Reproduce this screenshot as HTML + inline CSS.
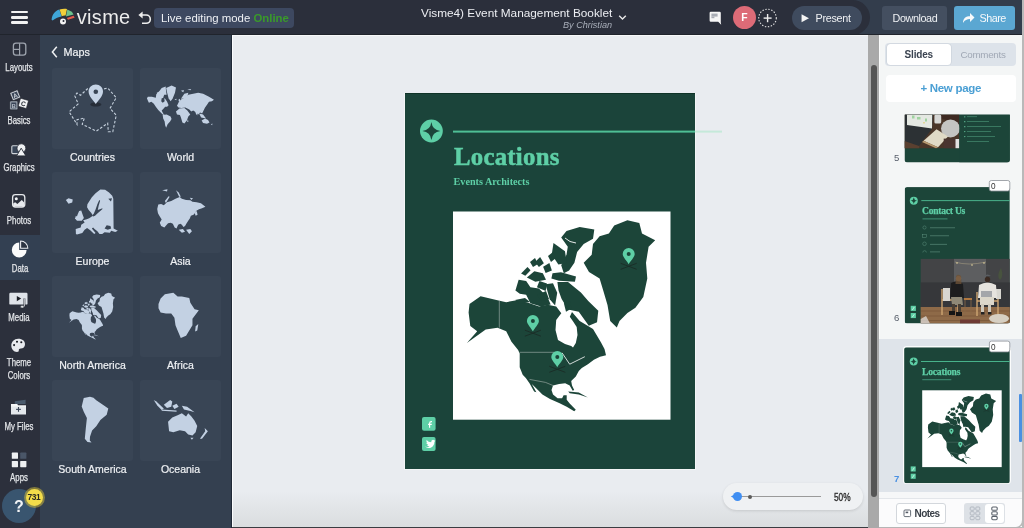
<!DOCTYPE html>
<html><head><meta charset="utf-8">
<style>
*{margin:0;padding:0;box-sizing:border-box}
html,body{width:1024px;height:528px;overflow:hidden;font-family:"Liberation Sans",sans-serif;background:#e9ecef}
body{will-change:transform}
.abs{position:absolute}
#topbar{position:absolute;left:0;top:0;width:1024px;height:35px;background:#333d4c}
#topdark{position:absolute;left:0;top:0;width:870px;height:35px;background:#2b2f3b;border-radius:0 18px 18px 0}
#leftbar{position:absolute;left:0;top:35px;width:40px;height:493px;background:#2c303c}
#panel{position:absolute;left:40px;top:35px;width:192px;height:493px;background:#344050;border-right:1.5px solid #1f2836}
#canvas{position:absolute;left:232px;top:35px;width:636px;height:493px;background:linear-gradient(to bottom,#e9ecf0 0,#e9ecf0 455px,#dadddf 491px);border-left:1.5px solid #fbfcfd;border-top:1px solid #f7f8f9;border-bottom:1px solid #f4f5f6}
#sbtrack{position:absolute;left:868px;top:35px;width:11px;height:493px;background:#a9a9a9}
#sbthumb{position:absolute;left:871px;top:65px;width:6px;height:432px;background:#555;border-radius:3px}
#right{position:absolute;left:879px;top:35px;width:143px;height:493px;background:#f4f6f6;border-left:1px solid #fbfcfc}
#edge{position:absolute;left:1022px;top:0;width:2px;height:528px;background:#b9b9b9}
</style></head>
<body>
<div id="topbar"></div>
<div id="topdark"></div>
<div class="abs" style="left:0;top:34px;width:1022px;height:1px;background:#20242c"></div>
<div id="leftbar"></div>
<div id="panel"></div>
<div id="canvas"></div>
<div id="sbtrack"></div>
<div class="abs" style="left:232px;top:527px;width:636px;height:1px;background:#3a3d42"></div>
<div id="sbthumb"></div>
<div id="right"></div>



<!-- CANVAS SLIDE -->
<div class="abs" style="left:404px;top:92.5px;width:292px;height:377px;background:#f3f5f6"></div>
<div class="abs" style="left:404.8px;top:93.3px;width:290.4px;height:375.4px;background:#0f3328"></div>
<div class="abs" style="left:405px;top:93.5px;width:290px;height:375px;background:#1b443a"></div>
<svg class="abs" style="left:0;top:0" width="868" height="528" viewBox="0 0 868 528">
  <circle cx="431.4" cy="131" r="11.4" fill="#5ecfa6"/>
  <path d="M431.4 122 Q432.4 130 440.4 131 Q432.4 132 431.4 140 Q430.4 132 422.4 131 Q430.4 130 431.4 122 Z" fill="#1c4539"/>
  <rect x="453" y="130.6" width="242" height="2" fill="#4fbf95"/>
  <rect x="695" y="130.6" width="27" height="2" fill="#c5e9da"/>
  <rect x="453" y="211.5" width="217.5" height="208.2" fill="#ffffff"/>
<path d="M469.5 303.9 L480.6 296.2 L498.5 300.5 L506.2 302.2 L515.2 300.5 L528.9 303 L539.1 306.4 L547.7 304.7 L556.2 306.4 L561.3 313.3 L556.2 320.1 L555.5 330 L558 340 L565 344 L571.2 346 L573 347.6 L575.8 343 L577.5 335 L576.7 326.9 L573.3 321.8 L569.8 316.7 L572 312 L579.7 321 L593 328.9 L600.9 342.2 L604.5 349.1 L606 355.2 L600 356.7 L593.9 359.7 L587.9 364.2 L581.8 368 L578.8 371 L575.8 376.4 L571.2 380.9 L572 385.5 L574.2 390 L572.7 390.8 L569.7 385.5 L565.2 383.2 L559.1 383.9 L553 385.5 L551.5 390 L553 394.5 L557.6 398.3 L562.1 398.3 L563.6 395.3 L566.7 395.3 L566.7 399.8 L569.7 403.6 L575.8 409.7 L574.2 411.2 L566.7 406.7 L559.1 402.9 L550 399.1 L542.4 394.5 L536.4 388.5 L531.8 383.9 L536.4 392.3 L534.1 391.5 L529.5 383.2 L525.8 377.9 L522.7 374.8 L519.7 367.3 L519.7 353.6 L518.1 349.9 L511.3 341.4 L506.2 331.2 L497.6 327.7 L485.7 329.5 L466.9 343.1 L477.2 331.2 L470.3 326 L468.6 312.4 Z" fill="#1c4539"/>
<path d="M583.7 262.7 L591.7 254.7 L593 244.1 L599.6 236.2 L608.9 233.5 L614.2 225.6 L627.4 220.3 L639.3 222.9 L642 233.5 L655.2 240.2 L648.6 246.8 L646 262.7 L647.3 278.6 L643.3 297.1 L635.4 307.7 L627.4 313 L619.5 321 L616.8 327.6 L610.2 321 L607.5 305.1 L603.6 291.8 L599.6 278.6 L589 272 Z" fill="#1c4539"/>
<path d="M561.2 237.5 L566.5 230.9 L579.7 226.9 L594.3 229.6 L593 238.8 L583.7 244.1 L577.1 252.1 L574.4 262.7 L569.1 270.6 L563.8 273.3 L561.2 265.3 L566.5 254.7 L567.8 246.8 Z" fill="#1c4539"/>
<path d="M553.49 243.06 L564.98 251.31 L566.74 262.93 L558.36 264.56 L551.74 254.56 Z" fill="#1c4539"/>
<path d="M515.41 290.54 L518.66 279.79 L526.16 280.92 L530.41 287.29 L538.91 288.42 L547.41 296.92 L550.66 304.42 L541.03 306.54 L530.41 303.29 L526.16 294.79 L519.78 293.67 Z" fill="#1c4539"/>
<path d="M521.09 273.58 L527.47 267.08 L530.59 270.33 L525.34 275.71 Z" fill="#1c4539"/>
<path d="M526.86 277.57 L534.36 271.2 L542.86 273.32 L545.98 279.7 L535.36 281.82 Z" fill="#1c4539"/>
<path d="M552.51 273.21 L561.01 272.21 L576.01 276.46 L574.89 281.71 L558.89 280.71 L551.39 278.59 Z" fill="#1c4539"/>
<path d="M545.47 284.26 L552.97 283.14 L557.23 292.76 L555.1 305.51 L549.73 299.13 Z" fill="#1c4539"/>
<path d="M557.4 281.9 L568.03 281.9 L580.9 292.52 L588.28 301.02 L598.28 310.65 L597.03 322.27 L588.78 325.65 L578.78 311.65 L568.03 309.53 L561.65 298.9 L558.53 290.4 Z" fill="#1c4539"/>
<path d="M563.9 303.32 L570.27 301.19 L571.4 308.57 L566.02 311.82 Z" fill="#1c4539"/>
<path d="M535.12 261.94 L540.12 256.94 L543.88 263.19 L538.88 266.94 Z" fill="#1c4539"/>
<path d="M543.12 266.69 L549.38 262.94 L551.88 270.44 L545.62 272.94 Z" fill="#1c4539"/>
<path d="M546.94 283.56 L539.44 281.06 L536.94 287.31 L545.69 291.06 Z" fill="#1c4539"/>
<path d="M568.2 391.5 L578.8 392.6 L587.9 397.6 L578.8 394.6 L569.7 393.2 Z" fill="#1c4539"/>
<path d="M530 262 L535 258 L538 264 L533 267 Z" fill="#1c4539"/>
<path d="M548 256 L553 252 L556 258 L551 262 Z" fill="#1c4539"/>
<path d="M537 295 L546 291 L549 299 L541 301 Z" fill="#1c4539"/>
<path d="M515 300 L525 298 L530 302 L520 304 Z" fill="#1c4539"/>
<path d="M562.1 352.9 L569.7 364.2 L584.8 356.7" fill="none" stroke="#ffffff" stroke-width="0.8"/>
<path d="M565 238 L570 241.5 L576 243" fill="none" stroke="#ffffff" stroke-width="0.9"/>
<path d="M499.3 300.5 L499.3 327.7" stroke="#a9b5b0" stroke-width="0.6"/>
<path d="M519.7 352.3 L554.5 352.3" stroke="#a9b5b0" stroke-width="0.6"/>
<path d="M529.5 379.4 L545.5 382.4 L553 385.5" fill="none" stroke="#a9b5b0" stroke-width="0.6"/>
<path d="M628.7 264.3 C627.2 261.3 622.7 257.2 622.7 254.0 A6 6 0 1 1 634.7 254.0 C634.7 257.2 630.2 261.3 628.7 264.3 Z" fill="#5ecfa6"/><circle cx="628.7" cy="254.0" r="2" fill="#1c4539"/><path d="M620.7 269.3 L636.7 263.3 M620.7 263.3 L636.7 269.3" stroke="#1b2a25" stroke-width="0.9" opacity="0.9"/>
<path d="M532.9 331.2 C531.4 328.2 526.9 324.09999999999997 526.9 320.9 A6 6 0 1 1 538.9 320.9 C538.9 324.09999999999997 534.4 328.2 532.9 331.2 Z" fill="#5ecfa6"/><circle cx="532.9" cy="320.9" r="2" fill="#1c4539"/><path d="M524.9 336.2 L540.9 330.2 M524.9 330.2 L540.9 336.2" stroke="#1b2a25" stroke-width="0.9" opacity="0.9"/>
<path d="M557.3 367.3 C555.8 364.3 551.3 360.2 551.3 357.0 A6 6 0 1 1 563.3 357.0 C563.3 360.2 558.8 364.3 557.3 367.3 Z" fill="#5ecfa6"/><circle cx="557.3" cy="357.0" r="2" fill="#1c4539"/><path d="M549.3 372.3 L565.3 366.3 M549.3 366.3 L565.3 372.3" stroke="#1b2a25" stroke-width="0.9" opacity="0.9"/>
  <rect x="422" y="417" width="13.6" height="13.8" rx="2" fill="#5ecfa6"/>
  <rect x="422" y="437.1" width="13.6" height="13.8" rx="2" fill="#5ecfa6"/>
  <path d="M429.6 427.8 V423.4 Q429.6 421.6 431.4 421.6 H432 M428.1 424.4 H431.8" fill="none" stroke="#ffffff" stroke-width="1.2"/>
  <path d="M424.8 446.6 Q427.5 447.6 429.6 446.4 Q427.6 446.3 427 445 Q427.8 445.1 428.3 444.8 Q426.4 444.3 426.2 442.5 Q426.8 442.8 427.4 442.8 Q425.8 441.6 426.6 439.9 Q428.4 442 431.2 442.2 Q431 440 433 439.8 Q433.8 439.8 434.3 440.4 L435.2 440 L434.7 440.9 L435.4 440.8 Q435 441.4 434.4 441.7 Q434.5 445.6 431.2 447.4 Q428 448.8 424.8 446.6 Z" fill="#ffffff"/>
</svg>
<div class="abs" style="left:454px;top:142.3px;font-family:'Liberation Serif',serif;font-weight:bold;font-size:24.8px;line-height:30px;color:#5ecfa6;letter-spacing:0.25px;white-space:nowrap;-webkit-text-stroke:0.5px #5ecfa6">Locations</div>
<div class="abs" style="left:453.5px;top:174.5px;font-family:'Liberation Serif',serif;font-weight:bold;font-size:10.2px;line-height:14px;color:#5ecfa6;white-space:nowrap">Events Architects</div>


<!-- ZOOM CONTROL -->
<div class="abs" style="left:722.5px;top:483.2px;width:140px;height:27px;background:#eff1f3;border-radius:13.5px;box-shadow:0 1px 3px rgba(0,0,0,0.12)"></div>
<div class="abs" style="left:740px;top:496px;width:80.5px;height:1px;background:#9a9a9a"></div>
<div class="abs" style="left:748px;top:494.6px;width:4.2px;height:4.2px;border-radius:50%;background:#5a5a5a"></div>
<div class="abs" style="left:733.3px;top:492.1px;width:9px;height:9px;border-radius:50%;background:#3f8ef2"></div>
<svg class="abs" style="left:730px;top:494px" width="5" height="5" viewBox="0 0 5 5"><path d="M4.5 0.6 L0.8 2.6 L4.5 4.4 Z" fill="#3f8ef2"/></svg>
<div class="abs" style="left:822px;top:489.8px;width:40px;text-align:center;font-size:11.2px;line-height:14px;color:#2e2e2e;transform:scaleX(0.74);transform-origin:21px 0;-webkit-text-stroke:0.35px #2e2e2e">50%</div>
<!-- RIGHT PANEL -->
<div class="abs" style="left:885px;top:43px;width:131px;height:23px;background:#dde3ea;border-radius:4px"></div>
<div class="abs" style="left:886.5px;top:44px;width:64.5px;height:21px;background:#ffffff;border-radius:3.5px;box-shadow:0 0 0 0.6px #c9d0d8"></div>
<div class="abs" style="left:886.5px;top:44px;width:64.5px;font-size:10px;line-height:21px;text-align:center;color:#3a4350;font-weight:bold;letter-spacing:-0.2px">Slides</div>
<div class="abs" style="left:951px;top:44px;width:64px;font-size:9.8px;line-height:21px;text-align:center;color:#a0a8b5;letter-spacing:-0.3px">Comments</div>
<div class="abs" style="left:886px;top:75px;width:129.5px;height:26.5px;background:#ffffff;border-radius:4px"></div>
<div class="abs" style="left:886px;top:81px;width:129.5px;font-size:11.5px;line-height:14px;text-align:center;color:#4a9fd4;font-weight:bold;letter-spacing:-0.3px">+ New page</div>

<!-- selected row -->
<div class="abs" style="left:879px;top:339px;width:143px;height:153px;background:#dfe4ea"></div>
<div class="abs" style="left:903.1px;top:346.3px;width:107.7px;height:138px;background:#fbfcfc;border-radius:3.5px"></div>
<div class="abs" style="left:1019.4px;top:394px;width:2.6px;height:48px;background:#4a90e2;border-radius:1px"></div>

<!-- thumb 5 -->
<svg class="abs" style="left:0;top:0" width="1024" height="528" viewBox="0 0 1024 528">
  <defs><clipPath id="c5"><path d="M904.5 114.4 H1009.9 V159.5 Q1009.9 162.5 1006.9 162.5 H907.5 Q904.5 162.5 904.5 159.5 Z"/></clipPath>
  <clipPath id="c6"><rect x="904.7" y="187.1" width="105.1" height="136.3" rx="2.5"/></clipPath>
  <clipPath id="c7"><rect x="904.1" y="347.3" width="105.7" height="136" rx="2.5"/></clipPath></defs>
  <g clip-path="url(#c5)">
    <rect x="904.5" y="114.4" width="105.4" height="48.1" fill="#1c4539"/>
    <rect x="904.5" y="114.4" width="54.8" height="33.8" fill="#4a3629"/>
    <path d="M940 114.4 H959.3 V132 Q952 120 940 118 Z" fill="#3e2a22"/>
    <ellipse cx="950.5" cy="128.5" rx="9.5" ry="9" fill="#c4c4c2"/>
    <path d="M905 114.4 H933 L932.2 128.5 L919 146 L905 144 Z" fill="#2c3134"/>
    <path d="M907 114.5 H932.2 L932 128.5 L907 125 Z" fill="#e4e8e2"/>
    <rect x="912" y="115.5" width="2.5" height="3" fill="#9fd3a0"/><rect x="917" y="117" width="3.5" height="2.5" fill="#9fd3a0"/><rect x="925" y="118.5" width="2" height="3" fill="#9fd3a0"/><rect x="923" y="122" width="2" height="1.5" fill="#e3d79a"/>
    <rect x="934.4" y="114.5" width="6.8" height="9" rx="1.5" fill="#d6d7d5"/>
    <path d="M923.6 140.8 L936.5 129.3 L948 136.5 L938 147.3 Z" fill="#e0dac6"/>
    <path d="M923.6 140.8 L938 147.3 L936 148.2 L922 142 Z" fill="#b89a70"/>
    <rect x="943.7" y="138.6" width="13" height="9.6" fill="#4a3530"/>
    <rect x="955.5" y="139" width="3.8" height="9.2" fill="#e2e2e2"/>
    <path d="M904.5 141 L919 146 V148.2 H904.5 Z" fill="#5a4030"/>
    <rect x="959.3" y="114.4" width="50.6" height="48.1" fill="#1c4539"/>
    <g fill="#6fd3a9">
      <circle cx="964.8" cy="116.8" r="0.6"/><rect x="967" y="116.3" width="10" height="0.8" opacity="0.45"/>
      <circle cx="964.8" cy="121.7" r="0.6"/><rect x="967" y="121.2" width="22" height="0.8" opacity="0.45"/>
      <circle cx="964.8" cy="126.7" r="0.6"/><rect x="967" y="126.2" width="34" height="0.8" opacity="0.45"/>
      <circle cx="964.8" cy="131.6" r="0.6"/><rect x="967" y="131.1" width="24" height="0.8" opacity="0.45"/>
      <circle cx="964.8" cy="136.6" r="0.6"/><rect x="967" y="136.1" width="28" height="0.8" opacity="0.45"/>
      <rect x="967" y="141.1" width="22" height="0.8" opacity="0.45"/>
    </g>
  </g>
  <!-- thumb 6 -->
  <g clip-path="url(#c6)">
    <rect x="904.7" y="187.1" width="105.1" height="136.3" fill="#1c4539"/>
    <circle cx="913.8" cy="200.7" r="4" fill="#5ecfa6"/>
    <path d="M913.8 197.4 Q914.2 200.3 917.1 200.7 Q914.2 201.1 913.8 204 Q913.4 201.1 910.5 200.7 Q913.4 200.3 913.8 197.4 Z" fill="#1c4539"/>
    <rect x="921.3" y="200.2" width="89" height="0.9" fill="#4fbf95"/>
    <text x="922" y="214.4" font-family="Liberation Serif" font-weight="bold" font-size="9.6" fill="#5ecfa6" stroke="#5ecfa6" stroke-width="0.25" textLength="43.3">Contact Us</text>
    <rect x="922.5" y="218.4" width="25" height="1" fill="#5ecfa6" opacity="0.55"/>
    <g stroke="#7fb9a3" stroke-width="0.45" fill="none" opacity="0.7">
      <circle cx="924.5" cy="227.5" r="1.6"/><rect x="922.7" y="234.5" width="3.8" height="2.8"/><circle cx="924.5" cy="243.8" r="1.8"/><path d="M922.8 252.5 A1.8 1.8 0 0 1 926.4 252.5"/>
    </g>
    <g fill="#8fc7b2" opacity="0.45">
      <rect x="930" y="227.4" width="25" height="0.8"/><rect x="930" y="235.4" width="19" height="0.8"/><rect x="930" y="243.9" width="17" height="0.8"/><rect x="930" y="251.5" width="10" height="0.8"/>
    </g>
    <rect x="920.7" y="258.9" width="89.5" height="64.5" fill="#434446"/>
    <rect x="954" y="258.9" width="32" height="23.5" fill="#5d5e60"/>
    <rect x="920.7" y="282.4" width="89.5" height="25.6" fill="#36373a"/>
    <path d="M920.7 307 H1010.2 V323.4 H920.7 Z" fill="#8e6a48"/>
    <path d="M920.7 311 H1010.2 M920.7 316 H1010.2 M920.7 320.5 H1010.2" stroke="#6d4c30" stroke-width="0.5"/>
    <path d="M955 262 Q968 266 986 262" stroke="#c8b890" stroke-width="0.4" fill="none"/>
    <circle cx="957" cy="263" r="0.8" fill="#e8d8a0"/><circle cx="972" cy="265" r="0.8" fill="#e8d8a0"/><circle cx="984" cy="263" r="0.8" fill="#e8d8a0"/>
    <g fill="none" stroke="#cfa672" stroke-width="1.4">
      <path d="M942 289 V315 M958 296 V315 M942 300 H958"/>
      <path d="M977 292 V316 M998 292 V316 M977 301 H998"/>
    </g>
    <rect x="943" y="288" width="7" height="13" fill="#d8d6d0"/>
    <rect x="996" y="289" width="5" height="10" fill="#d8d6d0"/>
    <path d="M951 283 Q958 279 963 284 L964 298 L950 298 Z" fill="#1d1d1e"/>
    <circle cx="958.5" cy="278.5" r="2.6" fill="#b58c6c"/>
    <path d="M956 276 Q958 273.5 961 276 L961.5 284 L955.5 284 Z" fill="#6d5238" opacity="0.8"/>
    <path d="M951 297 H962 L963 305 H952 Z" fill="#8f8977"/>
    <rect x="952" y="304" width="3" height="8" fill="#4a4034"/><rect x="958" y="304" width="3" height="8" fill="#4a4034"/>
    <path d="M949 311 H955 V315 H949 Z M956 312 H962 V316 H956 Z" fill="#151515"/>
    <path d="M979 285 Q987.5 280 996 285 L997 298 L978 298 Z" fill="#e6e3de"/>
    <circle cx="987.5" cy="279.5" r="2.7" fill="#3a2a22"/>
    <path d="M984 276 Q987.5 273 991 276 Z" fill="#5a5d62"/>
    <rect x="981" y="291" width="11" height="6" fill="#a4a6aa"/>
    <path d="M980 297 H994 V305 H980 Z" fill="#dcd7ca"/>
    <rect x="981" y="304" width="3" height="9" fill="#cfc8ba"/><rect x="988" y="304" width="3" height="9" fill="#cfc8ba"/>
    <rect x="981" y="312" width="3.5" height="2.5" fill="#222"/><rect x="988" y="312" width="3.5" height="2.5" fill="#222"/>
    <rect x="964" y="298" width="8" height="2" fill="#b07840"/>
    <path d="M965 300 V314 M971 300 V314" stroke="#8a6a4a" stroke-width="0.8"/>
    <ellipse cx="999" cy="318.5" rx="10" ry="4.5" fill="#d6cfc2"/>
    <rect x="960" y="319.5" width="20" height="4" fill="#6e3a34"/>
    <path d="M920.7 319 L926 316 L930 323.4 H920.7 Z" fill="#e6e6e6" opacity="0.7"/>
    <path d="M1001 268 Q1004 276 1000 280 Q996 276 1001 268 Z" fill="#4a5a3a" opacity="0.7"/>
    <rect x="910.7" y="305.8" width="5.2" height="5.1" fill="#5ecfa6"/>
    <rect x="910.7" y="313" width="5.2" height="5.1" fill="#5ecfa6"/>
    <path d="M912.3 310 L914.3 307 M912.3 317.2 L914.3 314.2" stroke="#e8fff5" stroke-width="0.7"/>
  </g>
  <!-- thumb 7 -->
  <g clip-path="url(#c7)">
    <rect x="904.1" y="347.3" width="105.7" height="136" fill="#1c4539"/>
    <circle cx="913.7" cy="361.5" r="4" fill="#5ecfa6"/>
    <path d="M913.7 358.2 Q914.1 361.1 917 361.5 Q914.1 361.9 913.7 364.8 Q913.3 361.9 910.4 361.5 Q913.3 361.1 913.7 358.2 Z" fill="#1c4539"/>
    <rect x="921" y="361" width="89" height="0.9" fill="#4fbf95"/>
    <text x="922" y="375" font-family="Liberation Serif" font-weight="bold" font-size="9.6" fill="#5ecfa6" stroke="#5ecfa6" stroke-width="0.25" textLength="38.4">Locations</text>
    <rect x="922.3" y="379.2" width="29" height="1" fill="#5ecfa6" opacity="0.55"/>
    <rect x="922.2" y="390.3" width="79.5" height="76.8" fill="#ffffff"/>
    <g transform="translate(922.2 390.3) scale(0.3655 0.3688) translate(-453 -211.5)">
<path d="M469.5 303.9 L480.6 296.2 L498.5 300.5 L506.2 302.2 L515.2 300.5 L528.9 303 L539.1 306.4 L547.7 304.7 L556.2 306.4 L561.3 313.3 L556.2 320.1 L555.5 330 L558 340 L565 344 L571.2 346 L573 347.6 L575.8 343 L577.5 335 L576.7 326.9 L573.3 321.8 L569.8 316.7 L572 312 L579.7 321 L593 328.9 L600.9 342.2 L604.5 349.1 L606 355.2 L600 356.7 L593.9 359.7 L587.9 364.2 L581.8 368 L578.8 371 L575.8 376.4 L571.2 380.9 L572 385.5 L574.2 390 L572.7 390.8 L569.7 385.5 L565.2 383.2 L559.1 383.9 L553 385.5 L551.5 390 L553 394.5 L557.6 398.3 L562.1 398.3 L563.6 395.3 L566.7 395.3 L566.7 399.8 L569.7 403.6 L575.8 409.7 L574.2 411.2 L566.7 406.7 L559.1 402.9 L550 399.1 L542.4 394.5 L536.4 388.5 L531.8 383.9 L536.4 392.3 L534.1 391.5 L529.5 383.2 L525.8 377.9 L522.7 374.8 L519.7 367.3 L519.7 353.6 L518.1 349.9 L511.3 341.4 L506.2 331.2 L497.6 327.7 L485.7 329.5 L466.9 343.1 L477.2 331.2 L470.3 326 L468.6 312.4 Z" fill="#1c4539"/>
<path d="M583.7 262.7 L591.7 254.7 L593 244.1 L599.6 236.2 L608.9 233.5 L614.2 225.6 L627.4 220.3 L639.3 222.9 L642 233.5 L655.2 240.2 L648.6 246.8 L646 262.7 L647.3 278.6 L643.3 297.1 L635.4 307.7 L627.4 313 L619.5 321 L616.8 327.6 L610.2 321 L607.5 305.1 L603.6 291.8 L599.6 278.6 L589 272 Z" fill="#1c4539"/>
<path d="M561.2 237.5 L566.5 230.9 L579.7 226.9 L594.3 229.6 L593 238.8 L583.7 244.1 L577.1 252.1 L574.4 262.7 L569.1 270.6 L563.8 273.3 L561.2 265.3 L566.5 254.7 L567.8 246.8 Z" fill="#1c4539"/>
<path d="M553.49 243.06 L564.98 251.31 L566.74 262.93 L558.36 264.56 L551.74 254.56 Z" fill="#1c4539"/>
<path d="M515.41 290.54 L518.66 279.79 L526.16 280.92 L530.41 287.29 L538.91 288.42 L547.41 296.92 L550.66 304.42 L541.03 306.54 L530.41 303.29 L526.16 294.79 L519.78 293.67 Z" fill="#1c4539"/>
<path d="M521.09 273.58 L527.47 267.08 L530.59 270.33 L525.34 275.71 Z" fill="#1c4539"/>
<path d="M526.86 277.57 L534.36 271.2 L542.86 273.32 L545.98 279.7 L535.36 281.82 Z" fill="#1c4539"/>
<path d="M552.51 273.21 L561.01 272.21 L576.01 276.46 L574.89 281.71 L558.89 280.71 L551.39 278.59 Z" fill="#1c4539"/>
<path d="M545.47 284.26 L552.97 283.14 L557.23 292.76 L555.1 305.51 L549.73 299.13 Z" fill="#1c4539"/>
<path d="M557.4 281.9 L568.03 281.9 L580.9 292.52 L588.28 301.02 L598.28 310.65 L597.03 322.27 L588.78 325.65 L578.78 311.65 L568.03 309.53 L561.65 298.9 L558.53 290.4 Z" fill="#1c4539"/>
<path d="M563.9 303.32 L570.27 301.19 L571.4 308.57 L566.02 311.82 Z" fill="#1c4539"/>
<path d="M535.12 261.94 L540.12 256.94 L543.88 263.19 L538.88 266.94 Z" fill="#1c4539"/>
<path d="M543.12 266.69 L549.38 262.94 L551.88 270.44 L545.62 272.94 Z" fill="#1c4539"/>
<path d="M546.94 283.56 L539.44 281.06 L536.94 287.31 L545.69 291.06 Z" fill="#1c4539"/>
<path d="M568.2 391.5 L578.8 392.6 L587.9 397.6 L578.8 394.6 L569.7 393.2 Z" fill="#1c4539"/>
<path d="M530 262 L535 258 L538 264 L533 267 Z" fill="#1c4539"/>
<path d="M548 256 L553 252 L556 258 L551 262 Z" fill="#1c4539"/>
<path d="M537 295 L546 291 L549 299 L541 301 Z" fill="#1c4539"/>
<path d="M515 300 L525 298 L530 302 L520 304 Z" fill="#1c4539"/>
<path d="M562.1 352.9 L569.7 364.2 L584.8 356.7" fill="none" stroke="#ffffff" stroke-width="0.8"/>
<path d="M565 238 L570 241.5 L576 243" fill="none" stroke="#ffffff" stroke-width="0.9"/>
<path d="M499.3 300.5 L499.3 327.7" stroke="#a9b5b0" stroke-width="0.6"/>
<path d="M519.7 352.3 L554.5 352.3" stroke="#a9b5b0" stroke-width="0.6"/>
<path d="M529.5 379.4 L545.5 382.4 L553 385.5" fill="none" stroke="#a9b5b0" stroke-width="0.6"/>
<path d="M628.7 264.3 C627.2 261.3 622.7 257.2 622.7 254.0 A6 6 0 1 1 634.7 254.0 C634.7 257.2 630.2 261.3 628.7 264.3 Z" fill="#5ecfa6"/><circle cx="628.7" cy="254.0" r="2" fill="#1c4539"/><path d="M620.7 269.3 L636.7 263.3 M620.7 263.3 L636.7 269.3" stroke="#1b2a25" stroke-width="0.9" opacity="0.9"/>
<path d="M532.9 331.2 C531.4 328.2 526.9 324.09999999999997 526.9 320.9 A6 6 0 1 1 538.9 320.9 C538.9 324.09999999999997 534.4 328.2 532.9 331.2 Z" fill="#5ecfa6"/><circle cx="532.9" cy="320.9" r="2" fill="#1c4539"/><path d="M524.9 336.2 L540.9 330.2 M524.9 330.2 L540.9 336.2" stroke="#1b2a25" stroke-width="0.9" opacity="0.9"/>
<path d="M557.3 367.3 C555.8 364.3 551.3 360.2 551.3 357.0 A6 6 0 1 1 563.3 357.0 C563.3 360.2 558.8 364.3 557.3 367.3 Z" fill="#5ecfa6"/><circle cx="557.3" cy="357.0" r="2" fill="#1c4539"/><path d="M549.3 372.3 L565.3 366.3 M549.3 366.3 L565.3 372.3" stroke="#1b2a25" stroke-width="0.9" opacity="0.9"/>
    </g>
    <rect x="910.7" y="466.4" width="5" height="5.1" fill="#5ecfa6"/>
    <rect x="910.7" y="473.7" width="5" height="5.1" fill="#5ecfa6"/>
    <path d="M912.3 470.6 L914.3 467.6 M912.3 477.8 L914.3 474.8" stroke="#e8fff5" stroke-width="0.7"/>
  </g>
  <!-- zero inputs -->
  <rect x="989.3" y="180.5" width="20.5" height="10.5" rx="2" fill="#ffffff" stroke="#8c9097" stroke-width="0.8"/>
  <rect x="989.4" y="341.1" width="20.4" height="10.8" rx="2" fill="#ffffff" stroke="#8c9097" stroke-width="0.8"/>
</svg>
<div class="abs" style="left:991px;top:180.8px;font-size:8.2px;line-height:11px;color:#333">0</div>
<div class="abs" style="left:991px;top:341.6px;font-size:8.2px;line-height:11px;color:#333">0</div>
<div class="abs" style="left:894px;top:151.6px;font-size:9.6px;line-height:11px;color:#59606c">5</div>
<div class="abs" style="left:894px;top:312px;font-size:9.6px;line-height:11px;color:#59606c">6</div>
<div class="abs" style="left:894px;top:473px;font-size:9.6px;line-height:11px;color:#4a90e2;font-weight:bold">7</div>

<!-- bottom bar -->
<div class="abs" style="left:879px;top:492px;width:143px;height:36px;background:#f6f7f8"></div>
<div class="abs" style="left:879px;top:497.5px;width:143px;height:30.5px;background:#fbfbfc;border-top:1px solid #e3e6ea"></div>
<div class="abs" style="left:896.4px;top:502.9px;width:50px;height:21.1px;background:#ffffff;border:1px solid #d3d7dc;border-radius:3px"></div>
<svg class="abs" style="left:903px;top:509px" width="9" height="9" viewBox="0 0 9 9"><rect x="1" y="1" width="6.6" height="6.6" rx="1" fill="none" stroke="#555c66" stroke-width="0.9"/><rect x="2.6" y="2.6" width="2.6" height="1.6" fill="#555c66"/></svg>
<div class="abs" style="left:914.5px;top:506.5px;font-size:10px;line-height:14px;color:#3a4048;letter-spacing:-0.55px;font-weight:bold">Notes</div>
<div class="abs" style="left:964.4px;top:502.9px;width:40.4px;height:21.1px;background:#dde1e6;border-radius:3px"></div>
<div class="abs" style="left:985px;top:504px;width:18.5px;height:19px;background:#ffffff;border-radius:3px"></div>
<svg class="abs" style="left:964px;top:503px" width="42" height="21" viewBox="0 0 42 21">
  <g fill="none" stroke="#b3b9c2" stroke-width="1"><rect x="6.2" y="4" width="4" height="3.3" rx="0.9"/><rect x="11.8" y="4" width="4" height="3.3" rx="0.9"/><rect x="6.2" y="8.7" width="4" height="3.3" rx="0.9"/><rect x="11.8" y="8.7" width="4" height="3.3" rx="0.9"/><rect x="6.2" y="13.4" width="4" height="3.3" rx="0.9"/><rect x="11.8" y="13.4" width="4" height="3.3" rx="0.9"/></g>
  <g fill="none" stroke="#5a616b" stroke-width="1.1"><rect x="27.8" y="4" width="5.4" height="3.3" rx="1.1"/><rect x="27.8" y="8.7" width="5.4" height="3.3" rx="1.1"/><rect x="27.8" y="13.4" width="5.4" height="3.3" rx="1.1"/></g>
</svg>
<!-- LEFT SIDEBAR -->
<div class="abs" style="left:0;top:235px;width:40px;height:45px;background:#334052"></div>
<style>
.lbl{position:absolute;left:-20px;width:80px;text-align:center;font-size:10px;line-height:10px;color:#e4e6e9;transform:scaleX(0.78);transform-origin:40px 0;white-space:nowrap;-webkit-text-stroke:0.25px #e4e6e9}
</style>
<div class="lbl" style="top:62.5px;left:-20.7px">Layouts</div>
<div class="lbl" style="top:116.0px;left:-20.6px">Basics</div>
<div class="lbl" style="top:163.4px;left:-20.8px">Graphics</div>
<div class="lbl" style="top:215.5px;left:-20.8px">Photos</div>
<div class="lbl" style="top:264.0px;left:-19.7px">Data</div>
<div class="lbl" style="top:313.3px;left:-21px">Media</div>
<div class="lbl" style="top:358.4px;left:-20.8px">Theme</div>
<div class="lbl" style="top:370.7px;left:-20.8px">Colors</div>
<div class="lbl" style="top:422.2px;left:-20.7px">My Files</div>
<div class="lbl" style="top:472.5px;left:-20.6px">Apps</div>

<svg class="abs" style="left:0;top:35px" width="40" height="460" viewBox="0 35 40 460">
  <!-- layouts -->
  <rect x="13.4" y="43.2" width="12.4" height="12" rx="2.6" fill="none" stroke="#9ea4ae" stroke-width="1.3"/>
  <line x1="19.6" y1="43.2" x2="19.6" y2="55.2" stroke="#9ea4ae" stroke-width="1.2"/>
  <line x1="13.4" y1="49.4" x2="19.6" y2="49.4" stroke="#9ea4ae" stroke-width="1.2"/>
  <!-- basics -->
  <g transform="rotate(-22 15.2 95.2)"><rect x="10.9" y="90.9" width="8.6" height="8.6" rx="1" fill="#c9ced6" stroke="#1e222b" stroke-width="0.6"/><rect x="12.3" y="92.3" width="5.8" height="5.8" fill="#3b4658"/><text x="15.2" y="97.6" font-size="6" font-family="Liberation Sans" font-weight="bold" text-anchor="middle" fill="#c9ced6">A</text></g>
  <rect x="9.8" y="101" width="8" height="8.8" rx="1" fill="#a9b2bd" stroke="#1e222b" stroke-width="0.6"/><rect x="11.2" y="102.4" width="5.2" height="6" fill="#3b4658"/><text x="13.8" y="107.8" font-size="5.6" font-family="Liberation Sans" font-weight="bold" text-anchor="middle" fill="#b9c0ca">B</text>
  <g transform="rotate(16 23.4 103.4)"><rect x="19.2" y="99.2" width="8.4" height="8.4" rx="1" fill="#f2f3f5" stroke="#1e222b" stroke-width="0.6"/><text x="23.4" y="106" font-size="6.6" font-family="Liberation Sans" font-weight="bold" text-anchor="middle" fill="#252a33">C</text></g>
  <!-- graphics -->
  <rect x="11.8" y="145.8" width="7.4" height="7.8" rx="1" fill="#3a4658" stroke="#cfd3d9" stroke-width="1.1"/>
  <circle cx="21.4" cy="148.2" r="4.4" fill="#eef0f2" stroke="#262a35" stroke-width="0.8"/>
  <path d="M21.2 148.2 L25.9 155.9 L16.6 155.9 Z" fill="#f2f3f5" stroke="#262a35" stroke-width="0.9" stroke-linejoin="round"/>
  <!-- photos -->
  <rect x="12.6" y="194.6" width="12.2" height="12.4" rx="2.8" fill="none" stroke="#e6e8eb" stroke-width="1.3"/>
  <circle cx="16.3" cy="198.8" r="1.5" fill="#f2f3f5"/>
  <path d="M13.2 203.6 L15.1 202.2 L17.4 204 L21.8 199.9 L24.2 202.6 L24.2 206.4 L13.2 206.4 Z" fill="#e8eaee"/>
  <!-- data -->
  <path d="M19.2 242.6 A7.4 7.4 0 1 0 26.6 250 L19.2 250 Z" fill="#fbfbfb"/>
  <path d="M20.6 241 A7.2 7.2 0 0 1 27.8 248.2 L20.6 248.2 Z" fill="#2c3442" stroke="#e8eaee" stroke-width="1.1" stroke-linejoin="round"/>
  <!-- media -->
  <rect x="9.3" y="292.8" width="18.2" height="11.8" rx="1.2" fill="#dfe3e9"/>
  <path d="M16.8 296 L21.2 298.6 L16.8 301.2 Z" fill="#1c1f26"/>
  <line x1="24.4" y1="298.4" x2="24.4" y2="306.6" stroke="#262a35" stroke-width="1.8"/>
  <line x1="24.4" y1="298.4" x2="24.4" y2="306.6" stroke="#e8eaee" stroke-width="0.8"/>
  <ellipse cx="22.2" cy="306.8" rx="1.8" ry="1.2" fill="#eef0f2" stroke="#262a35" stroke-width="0.5"/>
  <!-- theme colors -->
  <path d="M18.2 338.8 C22.5 338.8 25 341.2 25 344.2 C25 347 23.2 348.6 20.8 348.6 C19.4 348.6 18.6 349.4 18.8 350.6 C19 351.6 18.2 352 17 352 C13.6 352 11.3 349.2 11.3 345.6 C11.3 341.8 14.2 338.8 18.2 338.8 Z" fill="#e8eaee"/>
  <circle cx="17" cy="341.8" r="1.05" fill="#1a1d24"/>
  <circle cx="21.3" cy="342.3" r="1.05" fill="#1a1d24"/>
  <circle cx="14.1" cy="345.1" r="1.05" fill="#1a1d24"/>
  <!-- my files -->
  <path d="M14.8 401.2 L25.6 399.8 L25.6 404 L14.8 404 Z" fill="#4a5a6c"/>
  <path d="M11 404 H17 L18 405.6 H26 V414.5 H11 Z" fill="#e4e8ec"/>
  <path d="M11 404 H17 L18 405.6 H26 V406.6 H11 Z" fill="#f6f7f8"/>
  <rect x="16.1" y="408.8" width="4.8" height="1.1" fill="#3b4658"/>
  <rect x="17.95" y="407" width="1.1" height="4.8" fill="#3b4658"/>
  <!-- apps -->
  <rect x="11.8" y="452.6" width="6.2" height="6.2" rx="0.6" fill="#eef0f2"/>
  <rect x="20.2" y="452.6" width="6.2" height="6.2" rx="0.6" fill="#4a5668"/>
  <rect x="11.8" y="461" width="6.2" height="6.2" rx="0.6" fill="#eef0f2"/>
  <rect x="20.2" y="461" width="6.2" height="6.2" rx="0.6" fill="#eef0f2"/>
</svg>
<div class="abs" style="left:2px;top:489px;width:34px;height:34px;border-radius:50%;background:#39556f"></div>
<div class="abs" style="left:2px;top:494.5px;width:34px;font-size:16px;line-height:24px;text-align:center;color:#f2f4f6;font-weight:bold">?</div>
<div class="abs" style="left:23.5px;top:486.5px;width:21px;height:21px;border-radius:50%;background:rgba(200,180,60,0.55)"></div>
<div class="abs" style="left:25.5px;top:488.5px;width:17px;height:17px;border-radius:50%;background:#f3dc4a"></div>
<div class="abs" style="left:21px;top:491.5px;width:26px;font-size:8.4px;line-height:10px;text-align:center;color:#2a2a22;letter-spacing:-0.4px;font-weight:bold">731</div>

<!-- MAPS PANEL -->
<style>
.card{position:absolute;width:81px;height:81px;background:#394555;border-radius:3px}
.clbl{position:absolute;width:100px;text-align:center;font-size:10.5px;line-height:12px;color:#eef0f3;white-space:nowrap;-webkit-text-stroke:0.2px #eef0f3}
</style>
<svg class="abs" style="left:50px;top:45px" width="10" height="14" viewBox="0 0 10 14"><path d="M6.8 1.8 L2.4 7 L6.8 12.2" fill="none" stroke="#f0f2f4" stroke-width="1.5"/></svg>
<div class="abs" style="left:63.5px;top:45px;font-size:10.8px;line-height:14px;color:#f0f2f4;-webkit-text-stroke:0.2px #f0f2f4">Maps</div>

<div class="card" style="left:52px;top:68px"></div>
<div class="card" style="left:140px;top:68px"></div>
<div class="card" style="left:52px;top:172px"></div>
<div class="card" style="left:140px;top:172px"></div>
<div class="card" style="left:52px;top:276px"></div>
<div class="card" style="left:140px;top:276px"></div>
<div class="card" style="left:52px;top:380px"></div>
<div class="card" style="left:140px;top:380px"></div>

<div class="clbl" style="left:42.5px;top:151px">Countries</div>
<div class="clbl" style="left:130.5px;top:151px">World</div>
<div class="clbl" style="left:42.5px;top:255px">Europe</div>
<div class="clbl" style="left:130.5px;top:255px">Asia</div>
<div class="clbl" style="left:42.5px;top:359px">North America</div>
<div class="clbl" style="left:130.5px;top:359px">Africa</div>
<div class="clbl" style="left:42.5px;top:463px">South America</div>
<div class="clbl" style="left:130.5px;top:463px">Oceania</div>
<!-- MAP ICONS -->
<svg class="abs" style="left:0;top:0" width="232" height="528" viewBox="0 0 232 528"><path d="M87.8 88.5 L80.5 95.3 L77 93 L74.8 95.9 L78.2 103.9 L69.1 111.8 L77 124.3 L77 119.8 L84.4 118 L82.2 124.3 L96.4 131.1 L107.7 123.2 L108.3 131.7 L112.8 131.7 L116.25 115.2 L110 108.4 L116.25 97.6 L107.7 88 L103.2 89.1" fill="none" stroke="#c5d0dc" stroke-width="1.1" stroke-dasharray="2.6 1.8"/>
<ellipse cx="95.8" cy="104.4" rx="5.6" ry="2.1" fill="#262d38"/>
<path d="M95.8 104 C93 100.5 88.6 96 88.6 91.6 C88.6 87.6 91.8 84.6 95.8 84.6 C99.8 84.6 103 87.6 103 91.6 C103 96 98.6 100.5 95.8 104 Z" fill="#c6d4e6"/>
<circle cx="95.8" cy="91.8" r="2.3" fill="#394555"/>
<g transform="translate(142 82) scale(0.09852)"><path d="M50 165 L60 150 L100 150 L140 160 L145 125 L175 95 L200 60 L240 45 L245 100 L250 130 L225 130 L215 160 L235 170 L255 200 L270 235 L255 250 L235 250 L220 270 L200 290 L215 320 L230 335 L210 330 L190 310 L165 285 L140 250 L120 220 L95 200 L70 210 L60 190 Z" fill="#c3d1e3"/><path d="M245 60 L300 35 L345 55 L335 110 L310 170 L290 195 L270 165 L255 110 Z" fill="#c3d1e3"/><path d="M210 335 L250 330 L290 350 L300 375 L285 400 L260 430 L245 465 L235 440 L230 400 L215 370 Z" fill="#c3d1e3"/><path d="M355 240 L375 200 L400 175 L430 160 L470 130 L520 120 L570 110 L620 120 L680 150 L730 180 L710 195 L680 200 L660 230 L640 260 L625 290 L610 320 L590 310 L570 330 L550 310 L520 290 L500 300 L480 280 L440 260 L400 265 L370 260 Z" fill="#c3d1e3"/><path d="M395 170 L430 120 L470 110 L460 150 L430 165 Z" fill="#c3d1e3"/><path d="M540 300 L560 300 L562 340 L548 325 Z" fill="#c3d1e3"/><path d="M580 320 L620 330 L650 370 L600 360 Z" fill="#c3d1e3"/><path d="M345 300 L380 270 L430 265 L460 290 L490 330 L470 350 L455 390 L430 420 L410 410 L395 360 L385 335 L355 330 Z" fill="#c3d1e3"/><path d="M465 380 L472 400 L458 405 Z" fill="#c3d1e3"/><path d="M605 390 L640 370 L670 385 L685 410 L660 425 L620 415 Z" fill="#c3d1e3"/><path d="M700 430 L715 420 L712 440 Z" fill="#c3d1e3"/><path d="M370 180 L385 170 L390 195 L375 200 Z" fill="#c3d1e3"/><path d="M330 175 L350 170 L348 185 Z" fill="#c3d1e3"/><path d="M395 90 L425 80 L420 105 Z" fill="#c3d1e3"/><path d="M460 75 L500 70 L490 85 Z" fill="#c3d1e3"/><path d="M150 110 L185 95 L190 130 L160 140 Z" fill="#c3d1e3"/><path d="M200 165 L225 160 L230 195 L210 210 L195 195 Z" fill="#394555"/></g>
<g transform="translate(60 184) scale(0.10616)"><path d="M55 150 L80 135 L120 145 L115 175 L80 185 Z" fill="#c3d1e3"/><path d="M150 335 L165 290 L180 255 L200 250 L212 285 L225 320 L205 345 L160 345 Z" fill="#c3d1e3"/><path d="M140 330 L150 300 L165 310 L160 335 Z" fill="#c3d1e3"/><path d="M150 470 L148 425 L195 410 L200 385 L232 362 L218 342 L252 332 L275 322 L300 305 L305 290 L295 272 L270 245 L255 220 L258 190 L300 125 L335 88 L380 52 L425 55 L462 80 L492 110 L502 140 L505 420 L545 440 L520 452 L482 440 L470 460 L420 455 L398 470 L372 470 L352 445 L325 425 L312 410 L300 420 L335 462 L322 472 L285 435 L255 415 L232 432 L210 462 L160 476 Z" fill="#c3d1e3"/><path d="M320 300 L345 290 L360 300 L340 310 Z" fill="#c3d1e3"/><path d="M300 298 L318 280 L335 240 L352 190 L370 150 L378 158 L364 205 L356 245 L400 228 L398 238 L352 278 L330 298 L312 306 Z" fill="#394555"/><path d="M420 420 L440 388 L475 395 L482 420 L450 430 Z" fill="#394555"/><path d="M455 140 L490 135 L480 165 Z" fill="#394555"/></g>
<g transform="translate(150 184) scale(0.10616)"><path d="M68 235 L78 192 L105 188 L130 200 L160 172 L200 160 L240 140 L280 122 L300 138 L340 150 L380 152 L400 168 L440 172 L480 182 L522 215 L490 228 L462 238 L440 250 L425 270 L410 290 L385 300 L375 325 L360 345 L345 370 L330 395 L315 405 L300 385 L285 375 L265 385 L250 420 L232 410 L215 375 L195 365 L170 370 L135 410 L105 395 L92 365 L110 335 L88 300 L75 275 Z" fill="#c3d1e3"/><path d="M140 160 L175 115 L185 120 L150 180 Z" fill="#c3d1e3"/><path d="M245 60 L270 80 L290 120 L275 120 Z" fill="#c3d1e3"/><path d="M420 270 L440 255 L448 290 L430 300 Z" fill="#c3d1e3"/><path d="M270 430 L310 425 L330 450 L300 460 Z" fill="#c3d1e3"/><path d="M340 430 L380 425 L395 445 L370 470 Z" fill="#c3d1e3"/><path d="M115 60 L165 50 L160 70 Z" fill="#c3d1e3"/><path d="M375 130 L405 135 L390 150 Z" fill="#c3d1e3"/></g>
<g transform="translate(-45.4 238.8) scale(0.245)"><path d="M469.5 303.9 L480.6 296.2 L498.5 300.5 L506.2 302.2 L515.2 300.5 L528.9 303 L539.1 306.4 L547.7 304.7 L556.2 306.4 L561.3 313.3 L556.2 320.1 L555.5 330 L558 340 L565 344 L571.2 346 L573 347.6 L575.8 343 L577.5 335 L576.7 326.9 L573.3 321.8 L569.8 316.7 L572 312 L579.7 321 L593 328.9 L600.9 342.2 L604.5 349.1 L606 355.2 L600 356.7 L593.9 359.7 L587.9 364.2 L581.8 368 L578.8 371 L575.8 376.4 L571.2 380.9 L572 385.5 L574.2 390 L572.7 390.8 L569.7 385.5 L565.2 383.2 L559.1 383.9 L553 385.5 L551.5 390 L553 394.5 L557.6 398.3 L562.1 398.3 L563.6 395.3 L566.7 395.3 L566.7 399.8 L569.7 403.6 L575.8 409.7 L574.2 411.2 L566.7 406.7 L559.1 402.9 L550 399.1 L542.4 394.5 L536.4 388.5 L531.8 383.9 L536.4 392.3 L534.1 391.5 L529.5 383.2 L525.8 377.9 L522.7 374.8 L519.7 367.3 L519.7 353.6 L518.1 349.9 L511.3 341.4 L506.2 331.2 L497.6 327.7 L485.7 329.5 L466.9 343.1 L477.2 331.2 L470.3 326 L468.6 312.4 Z" fill="#c3d1e3"/><path d="M583.7 262.7 L591.7 254.7 L593 244.1 L599.6 236.2 L608.9 233.5 L614.2 225.6 L627.4 220.3 L639.3 222.9 L642 233.5 L655.2 240.2 L648.6 246.8 L646 262.7 L647.3 278.6 L643.3 297.1 L635.4 307.7 L627.4 313 L619.5 321 L616.8 327.6 L610.2 321 L607.5 305.1 L603.6 291.8 L599.6 278.6 L589 272 Z" fill="#c3d1e3"/><path d="M561.2 237.5 L566.5 230.9 L579.7 226.9 L594.3 229.6 L593 238.8 L583.7 244.1 L577.1 252.1 L574.4 262.7 L569.1 270.6 L563.8 273.3 L561.2 265.3 L566.5 254.7 L567.8 246.8 Z" fill="#c3d1e3"/><path d="M553.49 243.06 L564.98 251.31 L566.74 262.93 L558.36 264.56 L551.74 254.56 Z" fill="#c3d1e3"/><path d="M515.41 290.54 L518.66 279.79 L526.16 280.92 L530.41 287.29 L538.91 288.42 L547.41 296.92 L550.66 304.42 L541.03 306.54 L530.41 303.29 L526.16 294.79 L519.78 293.67 Z" fill="#c3d1e3"/><path d="M521.09 273.58 L527.47 267.08 L530.59 270.33 L525.34 275.71 Z" fill="#c3d1e3"/><path d="M526.86 277.57 L534.36 271.2 L542.86 273.32 L545.98 279.7 L535.36 281.82 Z" fill="#c3d1e3"/><path d="M552.51 273.21 L561.01 272.21 L576.01 276.46 L574.89 281.71 L558.89 280.71 L551.39 278.59 Z" fill="#c3d1e3"/><path d="M545.47 284.26 L552.97 283.14 L557.23 292.76 L555.1 305.51 L549.73 299.13 Z" fill="#c3d1e3"/><path d="M557.4 281.9 L568.03 281.9 L580.9 292.52 L588.28 301.02 L598.28 310.65 L597.03 322.27 L588.78 325.65 L578.78 311.65 L568.03 309.53 L561.65 298.9 L558.53 290.4 Z" fill="#c3d1e3"/><path d="M563.9 303.32 L570.27 301.19 L571.4 308.57 L566.02 311.82 Z" fill="#c3d1e3"/><path d="M535.12 261.94 L540.12 256.94 L543.88 263.19 L538.88 266.94 Z" fill="#c3d1e3"/><path d="M543.12 266.69 L549.38 262.94 L551.88 270.44 L545.62 272.94 Z" fill="#c3d1e3"/><path d="M546.94 283.56 L539.44 281.06 L536.94 287.31 L545.69 291.06 Z" fill="#c3d1e3"/><path d="M568.2 391.5 L578.8 392.6 L587.9 397.6 L578.8 394.6 L569.7 393.2 Z" fill="#c3d1e3"/><path d="M530 262 L535 258 L538 264 L533 267 Z" fill="#c3d1e3"/><path d="M548 256 L553 252 L556 258 L551 262 Z" fill="#c3d1e3"/><path d="M537 295 L546 291 L549 299 L541 301 Z" fill="#c3d1e3"/><path d="M515 300 L525 298 L530 302 L520 304 Z" fill="#c3d1e3"/></g>
<g transform="translate(150 288) scale(0.10616)"><path d="M80 150 L100 100 L140 60 L220 45 L260 80 L300 80 L370 95 L380 140 L420 200 L460 210 L430 250 L400 290 L400 350 L370 400 L340 450 L290 470 L260 400 L240 350 L230 280 L200 240 L150 240 L100 230 L80 190 Z" fill="#c3d1e3"/><path d="M430 360 L455 340 L445 400 L425 410 Z" fill="#c3d1e3"/></g>
<g transform="translate(0 0) scale(1.00000)"><path d="M81.7 406.5 L83.75 398.1 L90 396.7 L93.5 397.8 L96.25 400.2 L102.5 404.4 L108.3 408.5 L106.7 414.8 L100.4 420 L96.25 426.25 L92.1 430.4 L90 436.7 L89.8 440.5 L91.5 442.5 L87.5 441.9 L84.8 438.75 L85.8 428.3 L86.9 417.9 L83.75 411.7 Z" fill="#c3d1e3"/></g>
<g transform="translate(150 392) scale(0.10616)"><path d="M35 75 L60 90 L130 155 L110 170 L70 130 Z" fill="#c3d1e3"/><path d="M130 120 L190 75 L210 90 L200 140 L160 150 Z" fill="#c3d1e3"/><path d="M110 165 L250 175 L250 187 L110 177 Z" fill="#c3d1e3"/><path d="M210 130 L250 110 L270 140 L230 160 Z" fill="#c3d1e3"/><path d="M300 130 L350 140 L420 190 L380 180 L320 165 Z" fill="#c3d1e3"/><path d="M170 280 L210 240 L260 220 L300 200 L340 230 L360 200 L390 230 L420 270 L445 320 L430 380 L400 410 L360 400 L330 370 L280 360 L220 380 L180 370 Z" fill="#c3d1e3"/><path d="M380 430 L410 430 L395 450 Z" fill="#c3d1e3"/><path d="M470 440 L520 370 L515 340 L545 370 L490 440 Z" fill="#c3d1e3"/></g></svg>
<!-- TOP BAR CONTENT -->
<div class="abs" style="left:10.6px;top:11.2px;width:17.3px;height:2.3px;background:#f2f2f2;border-radius:1.2px"></div>
<div class="abs" style="left:10.6px;top:16.3px;width:17.3px;height:2.3px;background:#f2f2f2;border-radius:1.2px"></div>
<div class="abs" style="left:10.6px;top:21.3px;width:17.3px;height:2.3px;background:#f2f2f2;border-radius:1.2px"></div>
<svg class="abs" style="left:51px;top:8px" width="24" height="18" viewBox="0 0 24 18">
  <path d="M0.6 11.8 C1.2 6.5 3.8 3 8.4 1.6 L10.6 8.4 C7.6 8.8 4.6 10 1.6 12.6 Z" fill="#3fa6d8"/>
  <path d="M8.6 1.4 C11 0.7 13.6 0.6 16 0.9 L14.6 7.6 C13 7.5 11.8 7.8 10.8 8.2 Z" fill="#f2cf3a"/>
  <path d="M16.3 1.6 L20.8 3.8 L22.6 6.6 L15 8.6 Z" fill="#6cc08b"/>
  <path d="M15.8 10 L22.6 7.8 L23.6 9.8 L17 11.8 Z" fill="#e35a4c"/>
  <circle cx="12" cy="13.4" r="3" fill="#f4f4f4"/>
  <circle cx="12.5" cy="13" r="1" fill="#282c38"/>
</svg>
<div class="abs" style="left:76.8px;top:3px;font-size:20px;line-height:28px;color:#ececec;letter-spacing:0.3px">visme</div>
<svg class="abs" style="left:137px;top:10px" width="15" height="15" viewBox="0 0 15 15">
  <path d="M4.5 5 H9.2 C11.6 5 13.3 6.9 13.3 9.2 C13.3 11.5 11.6 13.3 9.2 13.3 H5" fill="none" stroke="#eeeeee" stroke-width="1.6"/>
  <path d="M5.6 1.4 L1.4 5 L5.6 8.6 Z" fill="#eeeeee"/>
</svg>
<div class="abs" style="left:154px;top:8px;width:140px;height:20px;background:#3d4860;border-radius:4px"></div>
<div class="abs" style="left:161px;top:4px;font-size:11.4px;line-height:28px;color:#eef0f4;white-space:nowrap">Live editing mode <span style="color:#3a9a2a;font-weight:bold">Online</span></div>

<div class="abs" style="left:421px;top:3px;font-size:11.8px;line-height:20px;color:#eceef2;white-space:nowrap">Visme4) Event Management Booklet</div>
<div class="abs" style="left:563px;top:16px;font-size:9.1px;line-height:18px;color:#a9afba;font-style:italic;white-space:nowrap">By Christian</div>
<svg class="abs" style="left:618px;top:14px" width="9" height="7" viewBox="0 0 9 7"><path d="M1.2 1.8 L4.5 5 L7.8 1.8" fill="none" stroke="#e8e8e8" stroke-width="1.4"/></svg>

<svg class="abs" style="left:708px;top:10px" width="15" height="16" viewBox="0 0 15 16">
  <path d="M2.8 1.8 H11.6 Q12.8 1.8 12.8 3 V12.4 L13.2 14.8 L10.2 11.8 H2.8 Q1.6 11.8 1.6 10.6 V3 Q1.6 1.8 2.8 1.8 Z" fill="#f6f6f6"/>
  <rect x="3.4" y="3.6" width="6.2" height="3" fill="#a9adb5"/>
  <rect x="3.4" y="6.6" width="3" height="1.6" fill="#a9adb5"/>
</svg>
<div class="abs" style="left:733px;top:6px;width:23px;height:23px;border-radius:50%;background:#dd6b77"></div>
<div class="abs" style="left:733px;top:6px;width:23px;height:23px;font-size:10.4px;line-height:23.5px;text-align:center;color:#fff;font-weight:bold">F</div>
<svg class="abs" style="left:757px;top:8px" width="21" height="20" viewBox="0 0 21 20">
  <circle cx="10.5" cy="10" r="8.8" fill="none" stroke="#e4e4e4" stroke-width="1.1" stroke-dasharray="1.4 1.6"/>
  <rect x="6.6" y="9.4" width="8" height="1.4" fill="#eeeeee"/>
  <rect x="9.9" y="6" width="1.4" height="8.2" fill="#eeeeee"/>
</svg>

<div class="abs" style="left:792px;top:6px;width:70px;height:24px;background:#3f4b5e;border-radius:12px"></div>
<svg class="abs" style="left:801px;top:14px" width="8.5" height="8.5" viewBox="0 0 8 8"><path d="M0.5 0.3 L7.5 4 L0.5 7.7 Z" fill="#f4f4f4"/></svg>
<div class="abs" style="left:815.5px;top:8px;font-size:10.8px;line-height:20px;color:#eef0f3;white-space:nowrap;letter-spacing:-0.3px">Present</div>

<div class="abs" style="left:882px;top:6px;width:65px;height:24px;background:#444f60;border-radius:3px"></div>
<div class="abs" style="left:892.5px;top:8px;font-size:10.8px;line-height:20px;color:#eef0f3;white-space:nowrap;letter-spacing:-0.4px">Download</div>
<div class="abs" style="left:954px;top:6px;width:61px;height:24px;background:#5ba7d2;border-radius:3px"></div>
<svg class="abs" style="left:962px;top:12px" width="13" height="12" viewBox="0 0 13 12"><path d="M1 11 C1 6 4 4.2 8 4.2 V1 L12.5 5.6 L8 10 V7 C5 7 2.8 8 1 11 Z" fill="#f6f9fb"/></svg>
<div class="abs" style="left:979.5px;top:8px;font-size:10.8px;line-height:20px;color:#f6f9fb;white-space:nowrap;letter-spacing:-0.5px">Share</div>
<div id="edge"></div>
<div class="abs" style="left:879px;top:527px;width:143px;height:1px;background:#b5b5b5"></div>
<div class="abs" style="left:1012px;top:516px;width:12px;height:12px;border-right:2px solid #b9b9b9;border-bottom:1px solid #b5b5b5;border-bottom-right-radius:8px"></div>
</body></html>
